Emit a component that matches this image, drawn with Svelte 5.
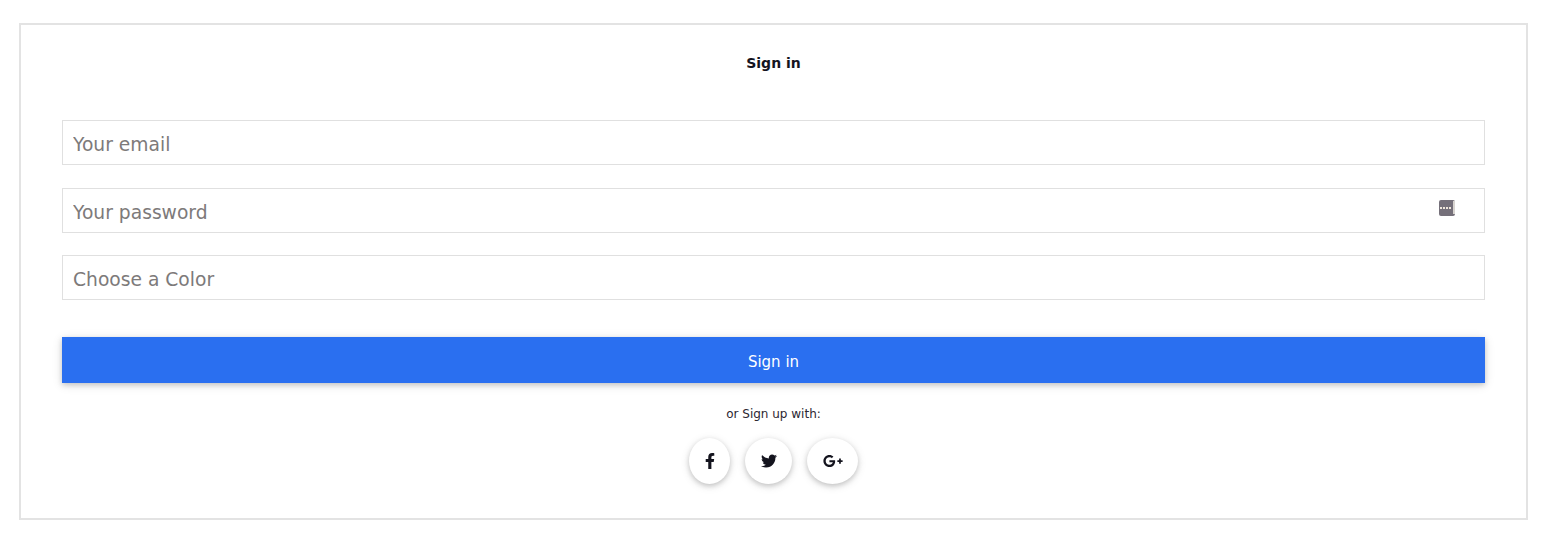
<script>
  const fields = [
    { type: 'email', placeholder: 'Your email' },
    { type: 'password', placeholder: 'Your password', keyIcon: true },
    { type: 'text', placeholder: 'Choose a Color' },
  ];
</script>

<div class="page">
  <form class="card" on:submit|preventDefault>
    <h1>Sign in</h1>

    <div class="fields">
      {#each fields as field}
        <div class="field">
          <input type={field.type} placeholder={field.placeholder} />
          {#if field.keyIcon}
            <span class="key-icon"><i></i><i></i><i></i><i></i><b></b></span>
          {/if}
        </div>
      {/each}
    </div>

    <button type="submit" class="submit">Sign in</button>

    <p class="alt">or Sign up with:</p>

    <div class="socials">
      <button type="button" class="social fb" aria-label="Facebook">
        <svg viewBox="0 0 320 512" width="10" height="16"><path d="M279.14 288l14.22-92.66h-88.91v-60.13c0-25.35 12.42-50.06 52.24-50.06h40.42V6.26S260.43 0 225.36 0c-73.22 0-121.08 44.38-121.08 124.72v70.62H22.89V288h81.39v224h100.17V288z" /></svg>
      </button>
      <button type="button" class="social tw" aria-label="Twitter">
        <svg viewBox="0 0 512 512" width="16" height="16"><path d="M459.37 151.716c.325 4.548.325 9.097.325 13.645 0 138.72-105.583 298.558-298.558 298.558-59.452 0-114.68-17.219-161.137-47.106 8.447.974 16.568 1.299 25.34 1.299 49.055 0 94.213-16.568 130.274-44.832-46.132-.975-84.792-31.188-98.112-72.772 6.498.974 12.995 1.624 19.818 1.624 9.421 0 18.843-1.3 27.614-3.573-48.081-9.747-84.143-51.98-84.143-102.985v-1.299c13.969 7.797 30.214 12.67 47.431 13.319-28.264-18.843-46.781-51.005-46.781-87.391 0-19.492 5.197-37.36 14.294-52.954 51.655 63.675 129.3 105.258 216.365 109.807-1.624-7.797-2.599-15.918-2.599-24.04 0-57.828 46.782-104.934 104.934-104.934 30.213 0 57.502 12.67 76.67 33.137 23.715-4.548 46.456-13.32 66.599-25.34-7.798 24.366-24.366 44.833-46.132 57.827 21.117-2.273 41.584-8.122 60.426-16.243-14.292 20.791-32.161 39.308-52.628 54.253z" /></svg>
      </button>
      <button type="button" class="social gp" aria-label="Google plus">
        <svg viewBox="0 0 640 512" width="20" height="16"><path d="M386.061 228.496c1.834 9.692 3.143 19.384 3.143 31.956C389.204 370.205 315.599 448 204.8 448c-106.084 0-192-85.915-192-192s85.916-192 192-192c51.864 0 95.083 18.859 128.611 50.292l-52.126 50.03c-14.145-13.621-39.028-29.599-76.485-29.599-65.484 0-118.92 54.221-118.92 121.277 0 67.056 53.436 121.277 118.92 121.277 75.961 0 104.513-54.745 108.965-82.773H204.8v-66.009h181.261zm185.406 6.437V179.2h-56.001v55.733h-55.733v56.001h55.733v55.733h56.001v-55.733H627.2v-56.001h-55.733z" /></svg>
      </button>
    </div>
  </form>
</div>

<style>
  :global(body) {
    margin: 0;
    background: #fff;
    color: #212529;
    font-family: "DejaVu Sans", "Open Sans", sans-serif;
  }

  .page {
    padding: 23px 25px 22px 19px;
  }

  .card {
    box-sizing: border-box;
    height: 497px;
    padding: 28px 41px 0;
    border: 2px solid #e3e3e3;
    display: flex;
    flex-direction: column;
    align-items: stretch;
  }

  h1 {
    margin: 0;
    height: 20px;
    font-size: 14px;
    line-height: 20px;
    font-weight: 700;
    text-align: center;
    color: #14141e;
  }

  .fields {
    margin-top: 47px;
    display: flex;
    flex-direction: column;
    gap: 22.5px;
  }

  .field {
    position: relative;
  }

  input {
    display: block;
    box-sizing: border-box;
    width: 100%;
    height: 45px;
    padding: 4px 10px 0;
    border: 1px solid #e0e0e0;
    border-radius: 0;
    outline: none;
    background: #fff;
    font-family: inherit;
    font-size: 18.7px;
    color: #495057;
  }

  input::placeholder {
    color: #7d7a7a;
    opacity: 1;
  }

  .key-icon {
    position: absolute;
    top: 12px;
    right: 30px;
    width: 16px;
    height: 16px;
    border-radius: 2px;
    background: #75707a;
    display: flex;
    align-items: center;
    gap: 1px;
    padding-left: 1px;
    box-sizing: border-box;
  }

  .key-icon i {
    width: 2px;
    height: 2px;
    background: #efe6dc;
  }

  .key-icon b {
    width: 2px;
    height: 13px;
    margin-left: auto;
    background: #d8d4d0;
  }

  .submit {
    margin-top: 37px;
    height: 46px;
    padding: 3px 0 0;
    border: none;
    background: #2a6ff0;
    color: #fff;
    font-family: inherit;
    font-size: 15px;
    box-shadow: 0 2px 5px rgba(0, 0, 0, 0.16), 0 2px 10px rgba(0, 0, 0, 0.12);
  }

  .alt {
    margin: 24px 0 0;
    font-size: 12px;
    line-height: 15px;
    text-align: center;
    color: #2c2630;
  }

  .socials {
    margin-top: 16px;
    display: flex;
    justify-content: center;
    gap: 15px;
  }

  .social {
    height: 46px;
    padding: 0;
    border: none;
    border-radius: 50%;
    background: #fff;
    display: flex;
    align-items: center;
    justify-content: center;
    box-shadow: 0 2px 5px rgba(0, 0, 0, 0.16), 0 2px 10px rgba(0, 0, 0, 0.12);
  }

  .social svg {
    fill: #14141e;
  }

  .fb { width: 41px; }
  .tw { width: 47px; }
  .gp { width: 51px; }
</style>
